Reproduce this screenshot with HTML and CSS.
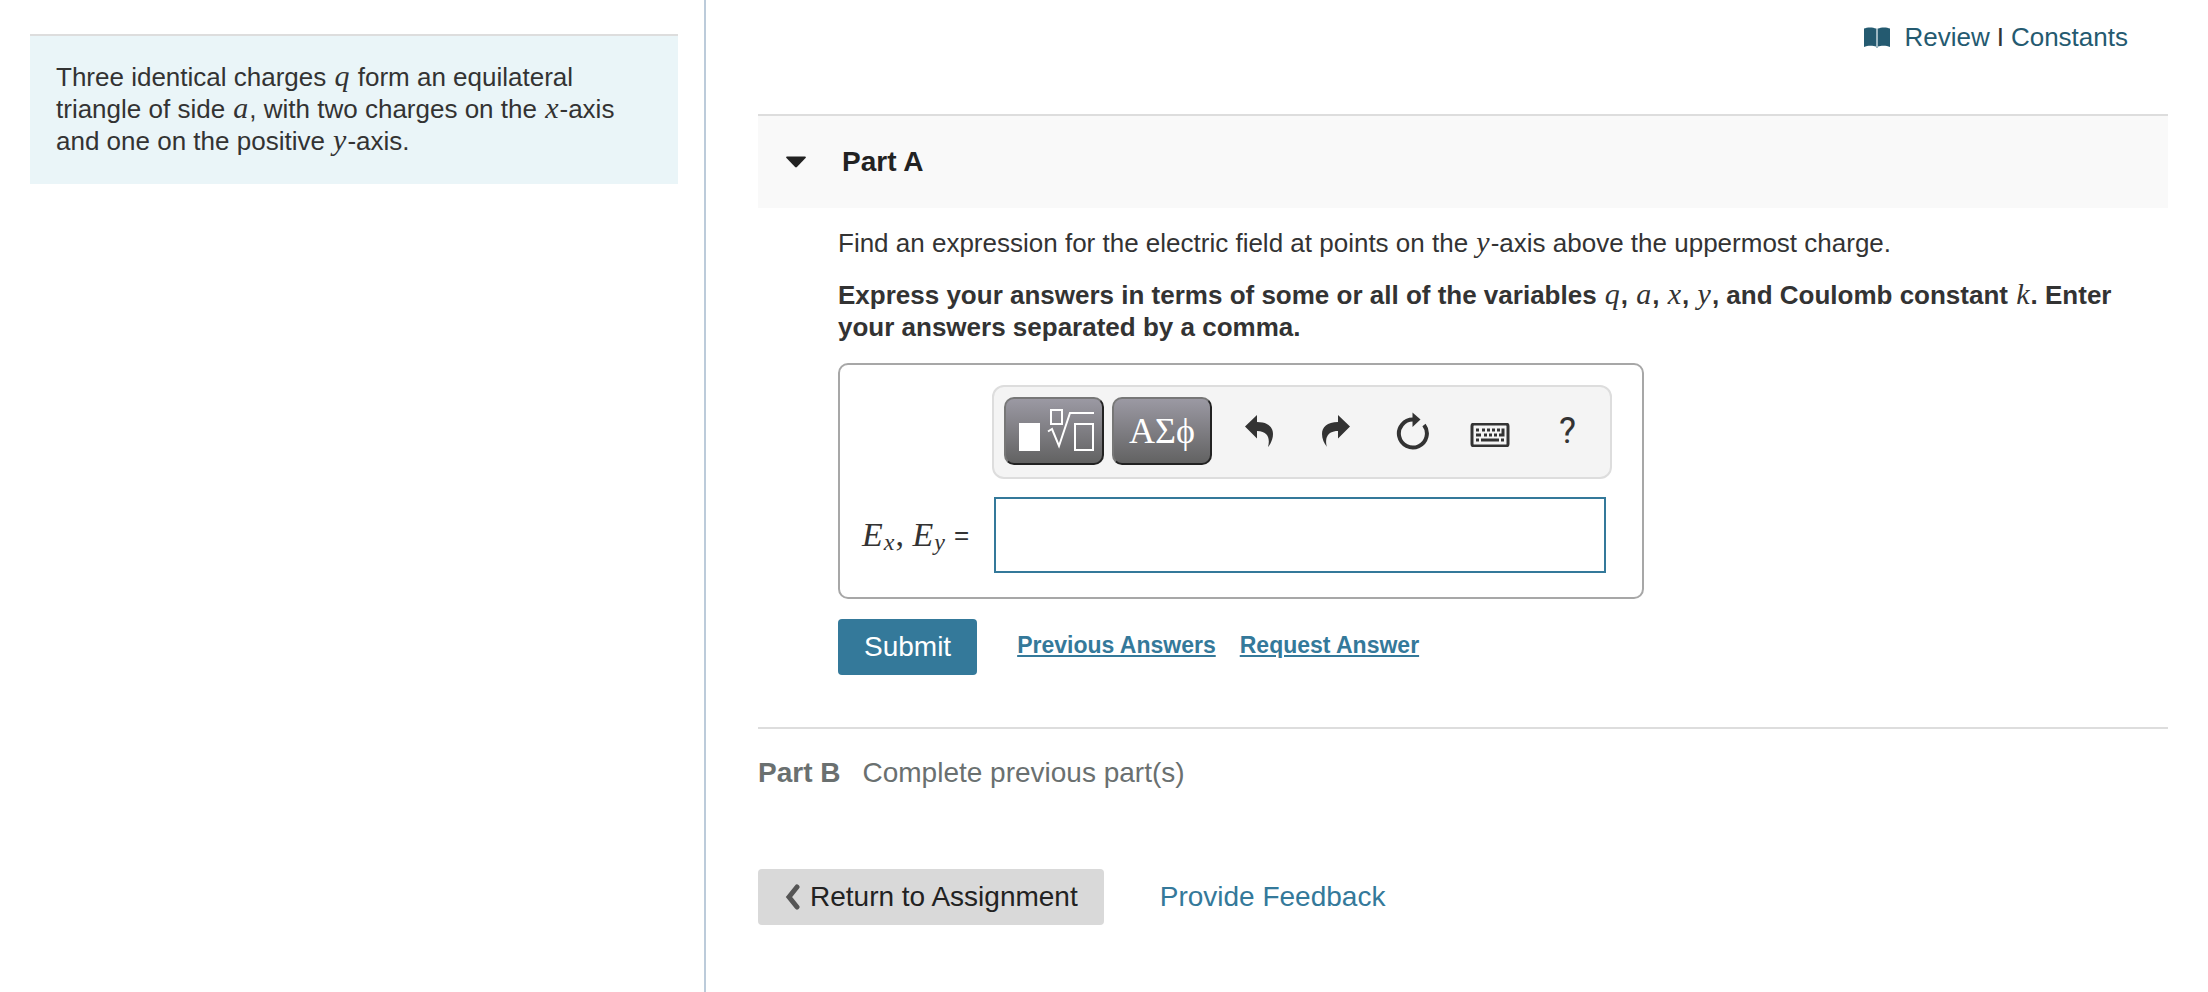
FILE: index.html
```html
<!DOCTYPE html>
<html lang="en">
<head>
    <meta charset="UTF-8">
    <meta name="viewport" content="width=device-width, initial-scale=1.0">
    <title>Part A - Electric field of three charges</title>
    <link rel="stylesheet" href="styles.css">
</head>
<body>
    <div class="page">
        <aside class="sidebar">
            <p class="problem">Three identical charges <i class="var">q</i> form an equilateral triangle of side <i class="var">a</i>, with two charges on the <i class="var">x</i>-axis and one on the positive <i class="var">y</i>-axis.</p>
        </aside>

        <main class="content">
            <nav class="resources">
                <svg class="book" viewBox="0 0 26 21" aria-hidden="true">
                    <path d="M0 1.500C3 0 9 0 12 1.500V19.500C9 18.500 3 18.500 0 20Z"/>
                    <path d="M14 1.500C17 0 23 0 26 1.500V20C23 18.500 17 18.500 14 19.500Z"/>
                    <path class="spine" d="M12 1.500H14V21H12Z"/>
                </svg>
                <a href="#review">Review</a><span class="bar">I</span><a href="#constants">Constants</a>
            </nav>

            <section>
                <button type="button" class="part-header" aria-expanded="true">
                    <svg class="caret" viewBox="0 0 22 12" aria-hidden="true"><path d="M1 0H21Q22.500 0 21.500 1.500L12 11.500Q11 12.500 10 11.500L.5 1.500Q-.5 0 1 0Z"/></svg>
                    <span>Part A</span>
                </button>

                <form class="part-body">
                    <p>Find an expression for the electric field at points on the <i class="var">y</i>-axis above the uppermost charge.</p>
                    <p class="instructions">Express your answers in terms of some or all of the variables <i class="var">q</i>, <i class="var">a</i>, <i class="var">x</i>, <i class="var">y</i>, and Coulomb constant <i class="var">k</i>. Enter your answers separated by a comma.</p>

                    <div class="answer-box">
                        <div class="toolbar">
                            <button type="button" class="palette" aria-label="Templates">
                                <svg viewBox="0 0 96 64" aria-hidden="true">
                                    <rect class="fill" x="13" y="24" width="21" height="28"/>
                                    <rect x="45" y="11" width="11" height="14"/>
                                    <path d="M42 32.500L46 30L53 47L64 14H88"/>
                                    <rect x="69" y="25" width="18" height="26"/>
                                </svg>
                            </button>
                            <button type="button" class="palette" aria-label="Symbols">ΑΣϕ</button>
                            <button type="button" class="tool" aria-label="Undo">
                                <svg width="28" height="34" viewBox="0 0 28 34"><path d="M0 12.500L12 1V8C23 8 28 13 28 20C28 25 26 29 23 33C25 26 24 17 12 17V24.500Z"/></svg>
                            </button>
                            <button type="button" class="tool" aria-label="Redo">
                                <svg width="28" height="34" viewBox="0 0 28 34"><path d="M28 12.500L16 1V8C5 8 0 13 0 20C0 25 2 29 5 33C3 26 4 17 16 17V24.500Z"/></svg>
                            </button>
                            <button type="button" class="tool" aria-label="Reset">
                                <svg width="34" height="38" viewBox="0 0 34 38"><path class="ring" d="M28 13A14 14 0 1 1 17 7.500"/><path d="M16.500 .5L24.500 7.500L16.500 15Z"/></svg>
                            </button>
                            <button type="button" class="tool keyboard" aria-label="Keyboard shortcuts">
                                <svg width="40" height="24" viewBox="0 0 40 24">
                                    <rect class="frame" x="2" y="1" width="36" height="22" rx="2"/>
                                    <path class="keys" d="M6 7H9M12 7H15M17 7H20M22 7H25M27 7H30M6 12H11M14 12H17M19 12H22M24 12H27M6 17H9M11 17H29M31 17H34"/>
                                    <path class="keys" d="M33 5.500V12H29"/>
                                </svg>
                            </button>
                            <button type="button" class="tool help" aria-label="Help">?</button>
                        </div>
                        <label class="answer-label" for="answer"><span class="formula"><i>E<sub>x</sub></i>, <i>E<sub>y</sub></i></span> <span>=</span></label>
                        <input class="answer" type="text" id="answer">
                    </div>

                    <div class="actions">
                        <button type="submit" class="btn submit">Submit</button>
                        <a href="#previous">Previous Answers</a>
                        <a href="#request">Request Answer</a>
                    </div>
                </form>
            </section>

            <section class="part-locked">
                <strong>Part B</strong>
                <span>Complete previous part(s)</span>
            </section>

            <footer class="footer">
                <button type="button" class="btn return">
                    <svg width="16" height="26" viewBox="0 0 16 26" aria-hidden="true"><path d="M13 3L5 13L13 23"/></svg>
                    Return to Assignment
                </button>
                <a href="#feedback">Provide Feedback</a>
            </footer>
        </main>
    </div>
</body>
</html>
```
FILE: styles.css
```css
body {
    margin: 0;
    font-family: "Liberation Sans", Arial, Helvetica, sans-serif;
    font-size: 26px;
    line-height: 32px;
    color: #333;
    background: #fff;
}

p {
    margin: 0;
}

a {
    color: #34799a;
    text-decoration: none;
}

button {
    padding: 0;
    border: 0;
    background: none;
    font: inherit;
    color: inherit;
    cursor: pointer;
}

.page {
    display: grid;
    grid-template-columns: minmax(0, 706px) 1fr;
    min-height: 100vh;
}

.sidebar {
    padding: 34px 26px 0 30px;
    border-right: 2px solid #bccbda;
}

.problem {
    padding: 25px 26px 27px;
    border-top: 2px solid #ddd;
    background: #eaf5f8;
}

.var,
.formula {
    font-family: "Liberation Serif", "Times New Roman", serif;
    font-weight: normal;
    line-height: 1;
}

.var {
    margin: 0 1px;
    font-size: 30px;
}

.content {
    padding: 21px 40px 0 52px;
}

/* Review | Constants */
.resources {
    display: flex;
    align-items: center;
    justify-content: flex-end;
    padding-right: 40px;
    margin-bottom: 61px;
}

.resources a {
    color: #245a70;
}

.book {
    width: 26px;
    height: 21px;
    margin-right: 14px;
    fill: #245a70;
}

.book .spine {
    fill: #9db8c3;
}

.bar {
    margin: 0 7px;
}

.part-header {
    display: flex;
    align-items: center;
    gap: 36px;
    width: 100%;
    padding: 30px 28px;
    border-top: 2px solid #ddd;
    background: #f9f9f9;
    font-size: 28px;
    font-weight: bold;
    color: #222;
}

.caret {
    width: 20px;
    height: 12px;
    fill: #222;
}

.part-body {
    padding: 19px 40px 52px 80px;
}

.instructions {
    margin-top: 20px;
    font-weight: bold;
}

.answer-box {
    display: grid;
    grid-template-columns: 130px 1fr;
    row-gap: 18px;
    box-sizing: border-box;
    max-width: 806px;
    margin-top: 20px;
    padding: 20px 30px 24px 22px;
    border: 2px solid #a7a7a7;
    border-radius: 10px;
}

.toolbar {
    grid-column: 2;
    display: flex;
    gap: 8px;
    padding: 10px 12px 12px 10px;
    border: 2px solid #ddd;
    border-radius: 12px;
    background: #f4f4f4;
}

.palette {
    box-sizing: border-box;
    width: 100px;
    height: 68px;
    border: 2px solid;
    border-color: #777 #222 #222 #777;
    border-radius: 10px;
    background: linear-gradient(#9b99a3, #626262);
    font-family: "Liberation Serif", "Times New Roman", serif;
    font-size: 36px;
    color: #fff;
}

.palette svg {
    display: block;
    fill: none;
    stroke: #fff;
    stroke-width: 2;
}

.palette .fill {
    fill: #fff;
    stroke: none;
}

.tool {
    display: flex;
    flex: 1;
    align-items: center;
    justify-content: center;
    margin-right: -8px;
}

.tool svg {
    fill: #333;
}

.tool .ring {
    fill: none;
    stroke: #333;
    stroke-width: 4;
}

.keyboard {
    padding-top: 8px;
}

.tool .frame {
    fill: #f4f4f4;
    stroke: #333;
    stroke-width: 3;
}

.tool .keys {
    fill: none;
    stroke: #333;
    stroke-width: 3;
}

.help {
    font-family: Roboto, sans-serif;
    font-size: 36px;
}

.answer-label {
    display: flex;
    align-items: center;
    align-self: center;
    gap: 8px;
    white-space: nowrap;
}

.formula {
    font-size: 34px;
}

.formula sub {
    margin: 0 1px;
    font-size: 24px;
    line-height: 0;
    vertical-align: -4px;
}

.answer {
    box-sizing: border-box;
    width: 100%;
    max-width: 612px;
    height: 76px;
    margin-left: 2px;
    padding: 0 12px;
    border: 2px solid #34799a;
    font: inherit;
    background: #fff;
}

.actions {
    display: flex;
    align-items: center;
    gap: 24px;
    margin-top: 20px;
}

.actions a {
    padding-bottom: 4px;
    font-size: 23px;
    font-weight: bold;
    text-decoration: underline;
}

.btn {
    height: 56px;
    border-radius: 4px;
    font-size: 28px;
}

.submit {
    margin-right: 16px;
    padding: 0 26px;
    background: #34799a;
    color: #fff;
}

.part-locked {
    display: flex;
    gap: 22px;
    padding: 28px 0 80px;
    border-top: 2px solid #ddd;
    font-size: 28px;
    color: #6a7070;
}

.footer {
    display: flex;
    align-items: center;
    gap: 56px;
    font-size: 28px;
}

.return {
    display: flex;
    align-items: center;
    gap: 10px;
    padding: 0 26px;
    background: #d9d9d9;
    color: #222;
}

.return svg {
    fill: none;
    stroke: #555;
    stroke-width: 5;
    stroke-linecap: round;
}
```
